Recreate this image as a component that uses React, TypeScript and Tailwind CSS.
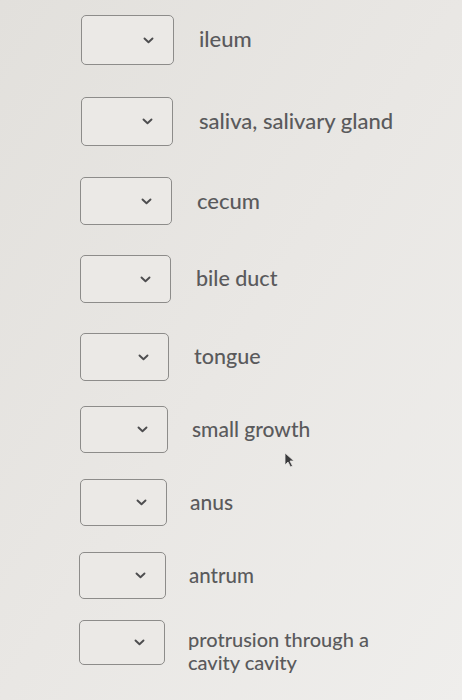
const rows = [
  { label: 'ileum', row: 'mt-[15px] ml-[81px] gap-[25px]', box: 'w-[93px] h-[50px]', text: 'text-[22px] -mt-[4px]' },
  { label: 'saliva, salivary gland', row: 'mt-[32px] ml-[81px] gap-[26px]', box: 'w-[92px] h-[49px]', text: 'text-[22px] -mt-[2px]' },
  { label: 'cecum', row: 'mt-[31px] ml-[80px] gap-[25px]', box: 'w-[92px] h-[48px]', text: 'text-[22px] -mt-[2px]' },
  { label: 'bile duct', row: 'mt-[30px] ml-[80px] gap-[25px]', box: 'w-[91px] h-[48px]', text: 'text-[21.5px] -mt-[2px]' },
  { label: 'tongue', row: 'mt-[30px] ml-[80px] gap-[25px]', box: 'w-[89px] h-[48px]', text: 'text-[21.5px] -mt-[2px]' },
  { label: 'small growth', row: 'mt-[25px] ml-[80px] gap-[24px]', box: 'w-[88px] h-[47px]', text: 'text-[21px] -mt-[1px]' },
  { label: 'anus', row: 'mt-[26px] ml-[80px] gap-[23px]', box: 'w-[87px] h-[47px]', text: 'text-[21px] -mt-[1px]' },
  { label: 'antrum', row: 'mt-[26px] ml-[79px] gap-[23px]', box: 'w-[87px] h-[47px]', text: 'text-[20.5px] -mt-[1px]' },
  { label: 'protrusion through a cavity cavity', row: 'mt-[21px] ml-[79px] gap-[23px] !items-start', box: 'w-[86px] h-[45px]', text: 'text-[20px] leading-[23px] w-[200px] mt-[8px]' },
]

function Chevron() {
  return (
    <svg width="11" height="7" viewBox="0 0 11 7" className="mr-[19px]">
      <path d="M1.5 1.5 L5.5 5.3 L9.5 1.5" fill="none" stroke="#4d4d4f" strokeWidth="1.9" strokeLinecap="round" strokeLinejoin="round" />
    </svg>
  )
}

export default function App() {
  return (
    <div
      className="w-[462px] h-[700px] overflow-hidden flex flex-col bg-gradient-to-br from-[#e2e0dc] via-[#e9e7e4] to-[#efeeec]"
      style={{ fontFamily: 'Lato, "Open Sans", sans-serif' }}
    >
      {rows.map((r) => (
        <div key={r.label} className={`flex items-center ${r.row}`}>
          <div className={`shrink-0 flex items-center justify-end rounded-[5px] border-[1.5px] border-[#8d8c8a] bg-[#ebe9e6] ${r.box}`}>
            <Chevron />
          </div>
          <span className={`text-[#5a5a5c] font-medium ${r.text}`}>{r.label}</span>
        </div>
      ))}
      <svg width="14" height="18" viewBox="0 0 14 18" className="absolute left-[283px] top-[452px]">
        <path d="M2 1 L2 13 L5 10 L7.5 15 L9.5 14 L7 9 L11 9 Z" fill="#3a3a3c" stroke="#e8e6e3" strokeWidth="0.8" />
      </svg>
    </div>
  )
}
